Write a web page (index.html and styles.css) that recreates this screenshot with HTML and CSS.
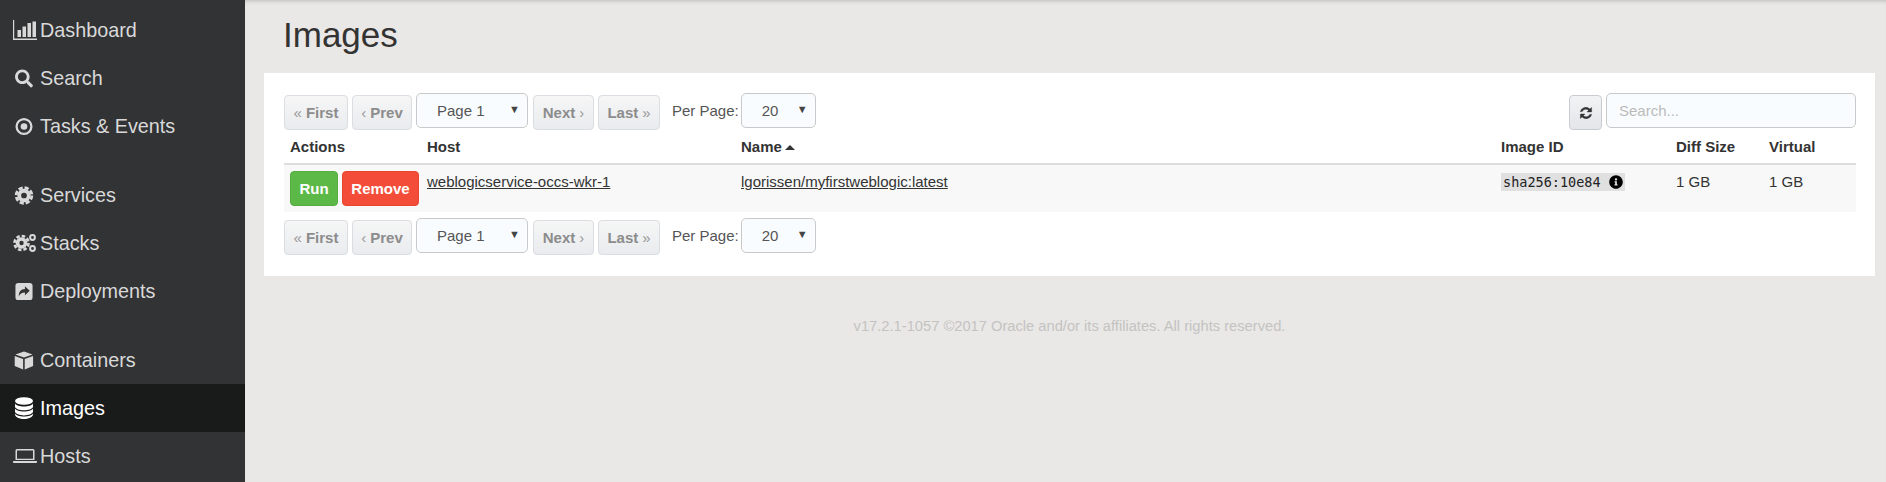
FILE: index.html
```html
<!DOCTYPE html>
<html lang="en">
<head>
    <meta charset="UTF-8">
    <title>Images</title>
    <link rel="stylesheet" href="styles.css">
</head>
<body>
    <nav class="sidebar">
        <a class="nav-item">
            <svg class="nav-icon nav-icon-wide" viewBox="0 0 24 20"><path d="M0 0h1.200v18.600H24V20H0z"/><path d="M4.500 10h3.500v7H4.500zM9.500 6.500H13V17H9.500zM14.500 3H18v14h-3.500zM19.500 1.500H23V17h-3.500z" /></svg>
            Dashboard
        </a>
        <a class="nav-item">
            <svg class="nav-icon" viewBox="-30 0 572 512"><path d="M505 442.700L405.300 343c-4.500-4.500-10.600-7-17-7H372c27.600-35.300 44-79.700 44-128C416 93.100 322.900 0 208 0S0 93.100 0 208s93.100 208 208 208c48.300 0 92.700-16.400 128-44v16.300c0 6.400 2.500 12.500 7 17l99.700 99.700c9.400 9.400 24.600 9.400 33.900 0l28.300-28.300c9.400-9.400 9.400-24.600.1-34zM208 336c-70.700 0-128-57.200-128-128 0-70.700 57.200-128 128-128 70.700 0 128 57.200 128 128 0 70.700-57.200 128-128 128z"/></svg>
            Search
        </a>
        <a class="nav-item">
            <svg class="nav-icon" viewBox="0 0 20 20"><circle cx="10" cy="10" r="7.800" fill="none" stroke="currentColor" stroke-width="2.400"/><circle cx="10" cy="10" r="3.500"/></svg>
            Tasks &amp; Events
        </a>

        <a class="nav-item nav-gap">
            <svg class="nav-icon" viewBox="0 0 20 20"><circle cx="10" cy="10" r="5" fill="none" stroke="currentColor" stroke-width="4"/><circle cx="10" cy="10" r="8.200" fill="none" stroke="currentColor" stroke-width="3" stroke-dasharray="4.500 2"/></svg>
            Services
        </a>
        <a class="nav-item">
            <svg class="nav-icon nav-icon-wide" viewBox="0 0 24 20"><circle cx="8.500" cy="10" r="4" fill="none" stroke="currentColor" stroke-width="3.600"/><circle cx="8.500" cy="10" r="7" fill="none" stroke="currentColor" stroke-width="2.600" stroke-dasharray="3.500 2"/><circle cx="19.500" cy="4.500" r="2.400" fill="none" stroke="currentColor" stroke-width="2"/><circle cx="19.500" cy="15.500" r="2.400" fill="none" stroke="currentColor" stroke-width="2"/></svg>
            Stacks
        </a>
        <a class="nav-item">
            <svg class="nav-icon" viewBox="0 0 20 20"><path fill-rule="evenodd" d="M4 1h12a3 3 0 0 1 3 3v12a3 3 0 0 1-3 3H4a3 3 0 0 1-3-3V4a3 3 0 0 1 3-3zM11 4.500v2.800c-4.500 0-6.500 3-6.500 8 1-3 3.500-4.300 6.500-4.300v3l5-4.800z"/></svg>
            Deployments
        </a>

        <a class="nav-item nav-gap">
            <svg class="nav-icon" viewBox="0 0 22 20"><path d="M11 0l9.500 3.400L11 6.800 1.500 3.400zM.8 5l9.200 3.300V20L.8 16zM21 5v11l-9.200 4V8.300z"/></svg>
            Containers
        </a>
        <a class="nav-item active">
            <svg class="nav-icon nav-icon-tall" viewBox="0 0 20 22"><ellipse cx="10" cy="4" rx="9" ry="3.800"/><path d="M1 6.500c1 2 4.500 3 9 3s8-1 9-3V10c-1 2-4.500 3.300-9 3.300S2 12 1 10zM1 11.600c1 2 4.500 3 9 3s8-1 9-3v3.500c-1 2-4.500 3.300-9 3.300S2 17 1 15.100zM1 16.600c1 2 4.500 3 9 3s8-1 9-3V18c-1 2.400-4.500 4-9 4s-8-1.600-9-4z"/></svg>
            Images
        </a>
        <a class="nav-item">
            <svg class="nav-icon nav-icon-wide" viewBox="0 0 24 18"><path fill-rule="evenodd" d="M4 2h16a1.500 1.500 0 0 1 1.500 1.500V13h-19V3.500A1.500 1.500 0 0 1 4 2zM4 3.500V11.700h16V3.500z"/><path d="M0 14h24v1a1 1 0 0 1-1 1H1a1 1 0 0 1-1-1z"/></svg>
            Hosts
        </a>
    </nav>

    <main class="content">
        <h1>Images</h1>

        <section class="card">
            <div class="toolbar">
                <a class="btn btn-first"><span class="arrow">&laquo;</span> First</a>
                <a class="btn btn-prev"><span class="arrow">&lsaquo;</span> Prev</a>
                <div class="select page-select">Page 1<span class="caret">&#9660;</span></div>
                <a class="btn btn-next">Next <span class="arrow">&rsaquo;</span></a>
                <a class="btn btn-last">Last <span class="arrow">&raquo;</span></a>
                <span class="per-page">Per Page:</span>
                <div class="select size-select">20<span class="caret">&#9660;</span></div>
                <a class="btn refresh">
                    <svg viewBox="0 0 20 20" width="14" height="14"><path d="M18 2v6.500h-6.500l2.200-2.200A5.500 5.500 0 0 0 4.600 8H1.800A8.300 8.300 0 0 1 15.700 4.300zM2 18v-6.500h6.500l-2.200 2.200a5.500 5.500 0 0 0 9.100-1.700h2.800A8.300 8.300 0 0 1 4.300 15.700z"/></svg>
                </a>
                <input class="search" type="text" placeholder="Search...">
            </div>

            <table>
                <thead>
                    <tr>
                        <th class="col-actions">Actions</th>
                        <th class="col-host">Host</th>
                        <th class="col-name">Name <span class="sort"></span></th>
                        <th class="col-id">Image ID</th>
                        <th class="col-diff">Diff Size</th>
                        <th>Virtual</th>
                    </tr>
                </thead>
                <tbody>
                    <tr>
                        <td><div class="actions"><a class="action run">Run</a><a class="action remove">Remove</a></div></td>
                        <td><a class="link">weblogicservice-occs-wkr-1</a></td>
                        <td><a class="link">lgorissen/myfirstweblogic:latest</a></td>
                        <td>
                            <span class="image-id">sha256:10e84
                                <svg viewBox="0 0 512 512" width="14" height="14"><path d="M256 8C119.043 8 8 119.083 8 256c0 136.997 111.043 248 248 248s248-111.003 248-248C504 119.083 392.957 8 256 8zm0 110c23.196 0 42 18.804 42 42s-18.804 42-42 42-42-18.804-42-42 18.804-42 42-42zm56 254c0 6.627-5.373 12-12 12h-88c-6.627 0-12-5.373-12-12v-24c0-6.627 5.373-12 12-12h12v-64h-12c-6.627 0-12-5.373-12-12v-24c0-6.627 5.373-12 12-12h64c6.627 0 12 5.373 12 12v100h12c6.627 0 12 5.373 12 12v24z"/></svg>
                            </span>
                        </td>
                        <td>1 GB</td>
                        <td>1 GB</td>
                    </tr>
                </tbody>
            </table>

            <div class="toolbar toolbar-bottom">
                <a class="btn btn-first"><span class="arrow">&laquo;</span> First</a>
                <a class="btn btn-prev"><span class="arrow">&lsaquo;</span> Prev</a>
                <div class="select page-select">Page 1<span class="caret">&#9660;</span></div>
                <a class="btn btn-next">Next <span class="arrow">&rsaquo;</span></a>
                <a class="btn btn-last">Last <span class="arrow">&raquo;</span></a>
                <span class="per-page">Per Page:</span>
                <div class="select size-select">20<span class="caret">&#9660;</span></div>
            </div>
        </section>

        <footer>v17.2.1-1057 &copy;2017 Oracle and/or its affiliates. All rights reserved.</footer>
    </main>
</body>
</html>
```

FILE: styles.css
```css
html, body {
    height: 100%;
}

body {
    margin: 0;
    display: flex;
    overflow: hidden;
    font-family: "Liberation Sans", Arial, sans-serif;
    font-size: 15px;
    color: #333;
    background-color: #e9e8e6;
}

/* sidebar */
.sidebar {
    flex: 0 0 245px;
    padding-top: 6px;
    background-color: #323335;
    box-sizing: border-box;
}

.nav-item {
    display: flex;
    align-items: center;
    height: 48px;
    padding-left: 14px;
    font-size: 19.8px;
    color: #d9d9d9;
}

.nav-gap {
    margin-top: 21px;
}

.nav-item.active {
    color: #fff;
    background-color: #191a1a;
}

.nav-icon {
    flex: 0 0 20px;
    width: 20px;
    height: 19px;
    margin-right: 6px;
    fill: currentColor;
}

.nav-icon-wide {
    flex-basis: 24px;
    width: 24px;
    height: 20px;
    margin-left: -1px;
    margin-right: 3px;
}

.nav-icon-tall {
    height: 22px;
}

/* main area */
.content {
    flex: 1;
    padding: 0 11px 0 19px;
    box-shadow: inset 0 4px 4px -3px rgba(0, 0, 0, 0.2);
}

h1 {
    margin: 0;
    padding: 14px 0 0 19px;
    height: 73px;
    box-sizing: border-box;
    font-size: 35px;
    font-weight: 400;
    line-height: 42px;
}

.card {
    height: 203px;
    padding: 20px 19px 0 20px;
    background: #fff;
    box-sizing: border-box;
}

.toolbar {
    display: flex;
    align-items: flex-start;
    height: 37px;
}

.toolbar-bottom {
    margin-top: 6px;
}

.btn {
    display: flex;
    align-items: center;
    justify-content: center;
    gap: 4px;
    height: 35px;
    margin-top: 2px;
    margin-right: 4px;
    box-sizing: border-box;
    font-weight: 700;
    color: #8c8c8c;
    background: linear-gradient(#f6f6f6, #e9ebee);
    border: 1px solid #dadde1;
    border-radius: 4px;
}

.btn-first { width: 64px; }
.btn-prev { width: 60px; }
.btn-next { width: 61px; }
.btn-last { width: 62px; }

.arrow {
    font-weight: 400;
    color: #999;
}

.select {
    position: relative;
    height: 35px;
    line-height: 33px;
    margin-right: 5px;
    box-sizing: border-box;
    color: #555;
    background: #f9fcfe;
    border: 1px solid #c9c9c9;
    border-radius: 5px;
}

.page-select {
    width: 112px;
    padding-left: 20px;
}

.size-select {
    width: 75px;
    padding-left: 20px;
}

.caret {
    position: absolute;
    top: -1px;
    right: 7px;
    font-size: 11px;
    color: #444;
}

.per-page {
    margin: 0 2px 0 8px;
    line-height: 35px;
    color: #555;
}

.refresh {
    width: 33px;
    margin-left: auto;
    background: linear-gradient(#f2f3f4, #e3e6ea);
    border-color: #c8ccd1;
    color: #333;
}

.refresh svg {
    fill: currentColor;
    stroke: currentColor;
    stroke-width: 0.6;
}

.search {
    width: 250px;
    height: 35px;
    padding: 0 12px;
    box-sizing: border-box;
    font-family: inherit;
    font-size: 15px;
    background: #f9fcfe;
    border: 1px solid #c9c9c9;
    border-radius: 5px;
}

.search::placeholder {
    color: #bbb;
}

table {
    width: 100%;
    table-layout: fixed;
    border-collapse: collapse;
}

th {
    height: 34px;
    padding: 0 6px;
    box-sizing: border-box;
    text-align: left;
    font-weight: 700;
    border-bottom: 2px solid #ddd;
}

.col-actions { width: 137px; }
.col-host { width: 314px; }
.col-name { width: 760px; }
.col-id { width: 175px; }
.col-diff { width: 93px; }

.sort {
    display: inline-block;
    width: 0;
    margin-left: -1px;
    vertical-align: 2px;
    border-left: 5px solid transparent;
    border-right: 5px solid transparent;
    border-bottom: 5px solid #333;
}

td {
    height: 48px;
    padding: 7px 6px 0;
    box-sizing: border-box;
    vertical-align: top;
    line-height: 20px;
    background: #f8f8f8;
}

.actions {
    display: flex;
    gap: 4px;
    margin-top: -1px;
}

.action {
    display: flex;
    flex-shrink: 0;
    align-items: center;
    justify-content: center;
    height: 35px;
    box-sizing: border-box;
    font-weight: 700;
    color: #fff;
    border-radius: 4px;
}

.run {
    width: 48px;
    background: #5cb947;
    border: 1px solid #55ad41;
}

.remove {
    width: 77px;
    background: #f34d39;
    border: 1px solid #ea4431;
}

.link {
    color: #333;
    text-decoration: underline;
}

.image-id {
    display: inline-block;
    width: 124px;
    box-sizing: border-box;
    padding: 0 2px;
    font-family: "DejaVu Sans Mono", monospace;
    font-size: 13.5px;
    line-height: 18px;
    white-space: nowrap;
    color: #222;
    background: #e0e0e0;
}

.image-id svg {
    vertical-align: -2px;
}

footer {
    margin-top: 42px;
    text-align: center;
    font-size: 14.7px;
    color: #c4c3c1;
}
```
